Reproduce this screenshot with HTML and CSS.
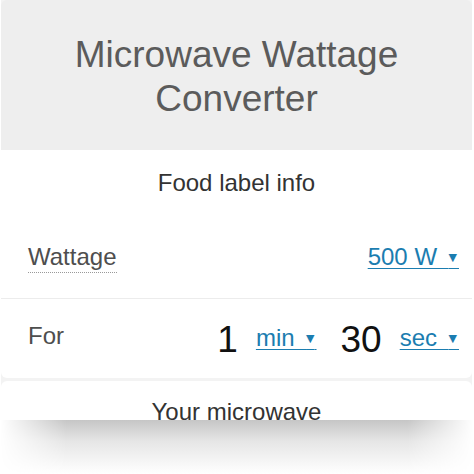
FILE: index.html
```html
<!DOCTYPE html>
<html lang="en">
<head>
<meta charset="UTF-8">
<meta name="viewport" content="width=device-width, initial-scale=1.0">
<title>Microwave Wattage Converter</title>
<link rel="stylesheet" href="styles.css">
</head>
<body>
<div id="wrap">
    <div class="calc">
        <header class="title">
            <h1>Microwave Wattage Converter</h1>
        </header>
        <section class="card first">
            <h2>Food label info</h2>
            <div class="row">
                <span class="label"><span class="dotted">Wattage</span></span>
                <a href="javascript:;" class="unit">500 W&nbsp;&thinsp;<span class="tri">&#9660;</span>&#8202;</a>
            </div>
            <div class="row time">
                <span class="label">For</span>
                <div class="vals"><span class="num">1</span><a href="javascript:;" class="unit gap">min&nbsp;&thinsp;<span class="tri">&#9660;</span>&#8202;</a><span class="num">30</span><a href="javascript:;" class="unit">sec&nbsp;&thinsp;<span class="tri">&#9660;</span>&#8202;</a></div>
            </div>
        </section>
        <section class="card">
            <h2>Your microwave</h2>
        </section>
    </div>
</div>
<div class="fade"></div>
</body>
</html>
```
FILE: styles.css
```css
html, body {margin: 0;padding: 0;background: #fff;}
body {font-family: "Liberation Sans", Arial, sans-serif;}
#wrap {height: 420px;overflow: hidden;padding: 0 2px 0 1px;}
.calc {display: flex;flex-direction: column;gap: 3px;background: #f3f3f3;}
.title {height: 146px;padding-top: 4px;background: #eee;border-radius: 6px 6px 0 0;display: flex;align-items: center;justify-content: center;margin-bottom: -3px;}
.title h1 {margin: 0;font-weight: normal;font-size: 37px;line-height: 44px;color: #5b5b5b;text-align: center;width: 340px;}
.card {background: #fff;border-radius: 6px;}
.first {border-radius: 0 0 6px 6px;padding-top: 19px;}
.card h2 {margin: 0;font-weight: normal;font-size: 24px;line-height: 28px;color: #333;text-align: center;}
.first h2 {margin-bottom: 46px;}
.card + .card h2 {padding-top: 17px;}
.row {display: flex;justify-content: space-between;align-items: baseline;padding: 0 13px 27px 27px;font-size: 24px;line-height: 28px;border-bottom: 1px solid #ececec;}
.time {border-bottom: 0;padding-top: 19px;padding-bottom: 16px;}
.label {color: #4e4e4e;}
.dotted {border-bottom: 1px dotted #999;padding-bottom: 2px;}
.vals {white-space: nowrap;}
.num {font-size: 37px;line-height: 44px;color: #111;margin-right: 18px;vertical-align: -8px;}
.vals .unit {vertical-align: -2px;}
.unit {color: #1b7db0;text-decoration: underline;text-decoration-thickness: 1px;text-underline-offset: 3px;}
.gap {margin-right: 24px;}
.tri {font-family: "DejaVu Sans", sans-serif;font-size: 11px;line-height: 0;position: relative;top: -4px;}
.fade {height: 54px;background: linear-gradient(#c6c6c6, #e6e6e6 40%, #fff);-webkit-mask-image: linear-gradient(to right, transparent, #000 14%, #000 86%, transparent);mask-image: linear-gradient(to right, transparent, #000 14%, #000 86%, transparent);}
```
